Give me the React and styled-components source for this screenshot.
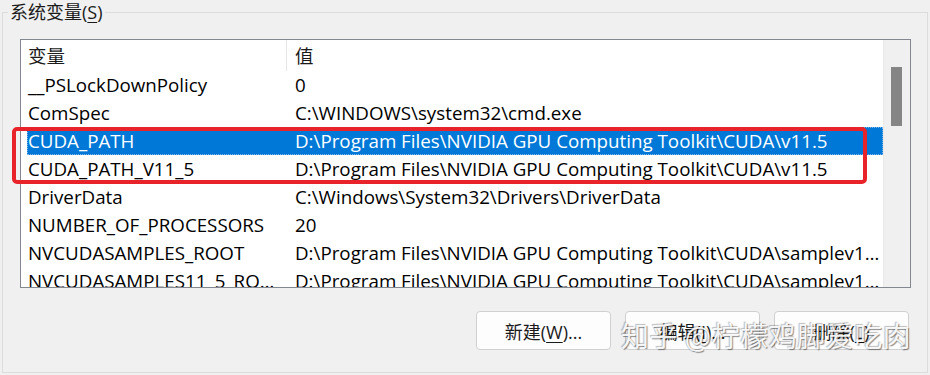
import styled, { createGlobalStyle } from "styled-components"

const GlobalStyle = createGlobalStyle`
  html, body {
    margin: 0;
    padding: 0;
    background: #f0f0f0;
    overflow: hidden;
  }
  body {
    font-family: "Open Sans", "Noto Sans CJK SC", sans-serif;
  }
`

const Window = styled.div`
  position: relative;
  width: 930px;
  height: 375px;
  box-sizing: border-box;
  padding: 0 2px 2px 2px;
  background: #f0f0f0;
  color: #000;
`

const Group = styled.fieldset`
  margin: 0;
  padding: 0;
  height: 100%;
  box-sizing: border-box;
  border: 1px solid #dcdcdc;
  min-width: 0;
`

const Legend = styled.legend`
  margin-left: 5px;
  padding: 0 2px;
  font-size: 18px;
  line-height: 24px;
  color: #1a1a1a;
`

const Key = styled.span`
  text-decoration: underline;
  text-underline-offset: 3px;
`

const Body = styled.div`
  padding: 15px 16px 0 17px;
`

const ListBox = styled.div`
  height: 249px;
  box-sizing: border-box;
  border: 1px solid #828790;
  background: #fff;
  display: grid;
  grid-template-columns: 1fr 27px;
  overflow: hidden;
`

const Table = styled.div`
  overflow: hidden;
  min-width: 0;
`

const Header = styled.div`
  display: grid;
  grid-template-columns: 266px 1fr;
  height: 31px;
  font-size: 18.5px;
  line-height: 31px;
  color: #1a1a1a;
`

const HeadCell = styled.div`
  padding-left: ${p => p.$pad}px;
  border-right: ${p => (p.$divider ? "1px solid #e5e5e5" : "none")};
`

const Row = styled.div`
  display: grid;
  grid-template-columns: 260px 1fr;
  margin-left: 6px;
  height: 28px;
  font-size: 18.75px;
  line-height: 28px;
  background: ${p => (p.$selected ? "#0078d7" : "transparent")};
  color: ${p => (p.$selected ? "#fff" : "#000")};
  outline: ${p => (p.$selected ? "1px dotted #7fb8e6" : "none")};
  outline-offset: -1px;
`

const Cell = styled.div`
  padding-left: ${p => p.$pad}px;
  padding-right: ${p => (p.$pad > 1 ? 0 : 6)}px;
  white-space: nowrap;
  overflow: hidden;
  text-overflow: ellipsis;
  min-width: 0;
`

const ScrollTrack = styled.div`
  background: #f0f0f0;
  border-left: 1px solid #e9e9e9;
`

const Thumb = styled.div`
  margin: 27px 0 0 7px;
  width: 11px;
  height: 59px;
  background: #858585;
`

const Buttons = styled.div`
  display: flex;
  justify-content: flex-end;
  gap: 14px;
  margin-top: 23px;
  padding-right: 2px;
`

const Button = styled.button`
  width: 135px;
  height: 39px;
  border: 1px solid #d0d0d0;
  border-radius: 4px;
  background: #fdfdfd;
  font-family: "Open Sans", "Noto Sans CJK SC", sans-serif;
  font-size: 18px;
  color: #1a1a1a;
  padding: 0;
`

const Highlight = styled.div`
  position: absolute;
  left: 12px;
  top: 127px;
  width: 855px;
  height: 57px;
  box-sizing: border-box;
  border: 4px solid #e8242a;
  border-radius: 5px;
  pointer-events: none;
`

const Watermark = styled.div`
  position: absolute;
  left: 621px;
  top: 315px;
  font-family: "Noto Sans CJK SC", sans-serif;
  font-size: 28px;
  line-height: 40px;
  letter-spacing: 0.5px;
  color: rgba(255, 255, 255, 0.92);
  text-shadow: 1px 1px 1px rgba(0, 0, 0, 0.45), -1px -1px 1px rgba(0, 0, 0, 0.25);
  white-space: nowrap;
  pointer-events: none;
`

const variables = [
  ["__PSLockDownPolicy", "0"],
  ["ComSpec", "C:\\WINDOWS\\system32\\cmd.exe"],
  ["CUDA_PATH", "D:\\Program Files\\NVIDIA GPU Computing Toolkit\\CUDA\\v11.5", true],
  ["CUDA_PATH_V11_5", "D:\\Program Files\\NVIDIA GPU Computing Toolkit\\CUDA\\v11.5"],
  ["DriverData", "C:\\Windows\\System32\\Drivers\\DriverData"],
  ["NUMBER_OF_PROCESSORS", "20"],
  ["NVCUDASAMPLES_ROOT", "D:\\Program Files\\NVIDIA GPU Computing Toolkit\\CUDA\\samplev11.5"],
  ["NVCUDASAMPLES11_5_ROOT", "D:\\Program Files\\NVIDIA GPU Computing Toolkit\\CUDA\\samplev11.5"],
]

export default function App() {
  return (
    <Window>
      <GlobalStyle />
      <Group>
        <Legend>
          系统变量(<Key>S</Key>)
        </Legend>
        <Body>
          <ListBox>
            <Table>
              <Header>
                <HeadCell $pad={7} $divider>变量</HeadCell>
                <HeadCell $pad={8}>值</HeadCell>
              </Header>
              {variables.map(([name, value, selected]) => (
                <Row key={name} $selected={selected}>
                  <Cell $pad={1}>{name}</Cell>
                  <Cell $pad={8}>{value}</Cell>
                </Row>
              ))}
            </Table>
            <ScrollTrack>
              <Thumb />
            </ScrollTrack>
          </ListBox>
          <Buttons>
            <Button>新建(<Key>W</Key>)...</Button>
            <Button>编辑(<Key>I</Key>)...</Button>
            <Button>删除(<Key>L</Key>)</Button>
          </Buttons>
        </Body>
      </Group>
      <Highlight />
      <Watermark>知乎 @柠檬鸡脚爱吃肉</Watermark>
    </Window>
  )
}
